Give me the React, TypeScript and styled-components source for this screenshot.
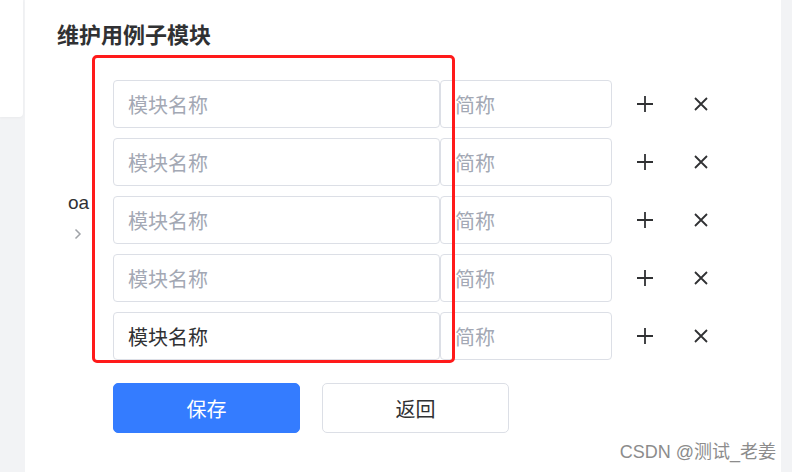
import React, { ReactElement } from 'react';
import styled, { createGlobalStyle } from 'styled-components';

const GlobalStyle = createGlobalStyle`
  html, body {
    margin: 0;
    padding: 0;
    background: #f2f3f5;
  }
  body {
    font-family: "Noto Sans CJK SC", "Noto Sans", sans-serif;
  }
`;

const StyledPage = styled.div`
  position: relative;
  width: 792px;
  height: 472px;
  display: flex;
  align-items: flex-start;
  background: #f2f3f5;
  overflow: hidden;
`;

const StyledSideCard = styled.div`
  width: 23px;
  height: 117px;
  background: #ffffff;
  border-radius: 0 0 4px 0;
  box-shadow: 0 1px 3px rgba(0, 0, 0, 0.04);
`;

const StyledPanel = styled.div`
  margin-left: 2px;
  width: 756px;
  height: 472px;
  box-sizing: border-box;
  background: #ffffff;
  padding: 21px 0 0 32px;
`;

const StyledTitle = styled.h2`
  margin: 0;
  font-size: 22px;
  line-height: 24px;
  font-weight: 700;
  color: #303133;
`;

const StyledFormBody = styled.div`
  display: flex;
  margin-top: 35px;
`;

const StyledTreeCol = styled.div`
  width: 56px;
  display: flex;
  flex-direction: column;
  justify-content: center;
  padding-left: 11px;
  box-sizing: border-box;
  padding-bottom: 8px;
`;

const StyledTreeLabel = styled.span`
  font-family: "Liberation Sans", "Noto Sans CJK SC", sans-serif;
  font-size: 19px;
  line-height: 22px;
  color: #303133;
`;

const StyledChevron = styled.svg`
  margin: 14px 0 0 6px;
`;

const StyledRows = styled.div`
  display: flex;
  flex-direction: column;
  gap: 10px;
`;

const StyledRow = styled.div`
  display: flex;
  align-items: center;
`;

const StyledInput = styled.input<{ $width: number }>`
  width: ${(p) => p.$width}px;
  height: 48px;
  box-sizing: border-box;
  border: 1px solid #dcdfe6;
  border-radius: 4px;
  padding: 0 14px;
  font-family: "Noto Sans CJK SC", sans-serif;
  font-size: 20px;
  color: #303133;
  background: #ffffff;
  outline: none;

  &::placeholder {
    color: #a3a8b4;
  }
`;

const StyledIconButton = styled.button<{ $gap: number }>`
  margin-left: ${(p) => p.$gap}px;
  width: 24px;
  height: 24px;
  padding: 0;
  border: none;
  background: transparent;
  display: flex;
  align-items: center;
  justify-content: center;
  cursor: pointer;
`;

const StyledActions = styled.div`
  display: flex;
  gap: 22px;
  margin: 23px 0 0 56px;
`;

const StyledButton = styled.button<{ $primary?: boolean }>`
  width: 187px;
  height: 50px;
  box-sizing: border-box;
  border-radius: 5px;
  font-family: "Noto Sans CJK SC", sans-serif;
  font-size: 20px;
  cursor: pointer;
  border: 1px solid ${(p) => (p.$primary ? '#347cff' : '#dcdfe6')};
  background: ${(p) => (p.$primary ? '#347cff' : '#ffffff')};
  color: ${(p) => (p.$primary ? '#ffffff' : '#303133')};
`;

const StyledAnnotation = styled.div`
  position: absolute;
  left: 92px;
  top: 55px;
  width: 363px;
  height: 308px;
  box-sizing: border-box;
  border: 3px solid #ff1a1a;
  border-radius: 5px;
  pointer-events: none;
`;

const StyledWatermark = styled.div`
  position: absolute;
  right: 16px;
  bottom: 9px;
  font-family: "Liberation Sans", "Noto Sans CJK SC", sans-serif;
  font-size: 18px;
  color: #8c8c8c;
  pointer-events: none;
`;

const rows = [0, 1, 2, 3, 4];

function PlusIcon(): ReactElement {
  return (
    <svg width="16" height="16" viewBox="0 0 16 16">
      <path d="M8 0v16M0 8h16" stroke="#303133" strokeWidth="1.8" fill="none" />
    </svg>
  );
}

function CloseIcon(): ReactElement {
  return (
    <svg width="14" height="14" viewBox="0 0 14 14">
      <path d="M1 1l12 12M13 1L1 13" stroke="#303133" strokeWidth="1.8" fill="none" />
    </svg>
  );
}

function App(): ReactElement {
  return (
    <>
      <GlobalStyle />
      <StyledPage>
        <StyledSideCard />
        <StyledPanel>
          <StyledTitle>维护用例子模块</StyledTitle>
          <StyledFormBody>
            <StyledTreeCol>
              <StyledTreeLabel>oa</StyledTreeLabel>
              <StyledChevron width="8" height="12" viewBox="0 0 8 12">
                <path d="M1.5 1.5L6 6l-4.5 4.5" stroke="#a0a3a8" strokeWidth="1.5" fill="none" />
              </StyledChevron>
            </StyledTreeCol>
            <StyledRows>
              {rows.map((i) => (
                <StyledRow key={i}>
                  {i === 4 ? (
                    <StyledInput $width={327} defaultValue="模块名称" />
                  ) : (
                    <StyledInput $width={327} placeholder="模块名称" />
                  )}
                  <StyledInput $width={172} placeholder="简称" />
                  <StyledIconButton $gap={21}>
                    <PlusIcon />
                  </StyledIconButton>
                  <StyledIconButton $gap={32}>
                    <CloseIcon />
                  </StyledIconButton>
                </StyledRow>
              ))}
            </StyledRows>
          </StyledFormBody>
          <StyledActions>
            <StyledButton $primary>保存</StyledButton>
            <StyledButton>返回</StyledButton>
          </StyledActions>
        </StyledPanel>
        <StyledAnnotation />
        <StyledWatermark>CSDN @测试_老姜</StyledWatermark>
      </StyledPage>
    </>
  );
}

export default App;
